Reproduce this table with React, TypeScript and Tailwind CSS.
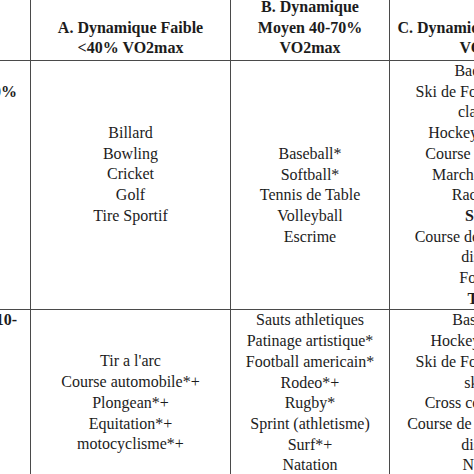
import React from "react";

function Head({ lines }: { lines: string[] }) {
  return (
    <div className="h-[60px] bg-white flex flex-col justify-end items-center pb-[1px] font-bold text-center">
      {lines.map((l, i) => (
        <div key={i} className="whitespace-nowrap">
          {l}
        </div>
      ))}
    </div>
  );
}

type Item = { t: string; b?: boolean };

function Cell({ items, pad }: { items: Item[]; pad: string }) {
  return (
    <div className={`bg-white flex flex-col items-center text-center ${pad}`}>
      {items.map((it, i) => (
        <div key={i} className={`whitespace-nowrap ${it.b ? "font-bold" : ""}`}>
          {it.t}
        </div>
      ))}
    </div>
  );
}

const t = (s: string): Item => ({ t: s });

export default function App() {
  return (
    <div className="w-[474px] h-[474px] overflow-hidden bg-white font-['Liberation_Serif',serif] text-[16px] leading-[20.7px] text-[#1c1c1c]">
      <div className="grid w-max grid-cols-[30px_199px_158px_200px] gap-px bg-[#4a4a4a]">
        {/* header row */}
        <div className="h-[60px] bg-white" />
        <Head lines={["A. Dynamique Faible", "<40% VO2max"]} />
        <Head lines={["B. Dynamique", "Moyen 40-70%", "VO2max"]} />
        <Head lines={["C. Dynamique Eleve >70%", "VO2max"]} />

        {/* row I */}
        <div className="bg-white overflow-hidden flex flex-col items-end pr-[13px] font-bold">
          <div className="h-[20.7px]" />
          <div className="whitespace-nowrap">I. Statique Faible &lt;10%</div>
        </div>
        <Cell
          pad="pt-[62px]"
          items={[t("Billard"), t("Bowling"), t("Cricket"), t("Golf"), t("Tire Sportif")]}
        />
        <Cell
          pad="pt-[83px]"
          items={[t("Baseball*"), t("Softball*"), t("Tennis de Table"), t("Volleyball"), t("Escrime")]}
        />
        <Cell
          pad="pt-0"
          items={[
            t("Badminton"),
            t("Ski de Fond (technique"),
            t("classique)"),
            t("Hockey sur gazon*"),
            t("Course d'orientation"),
            t("Marche athletique"),
            t("Racquetball"),
            { t: "Squash", b: true },
            t("Course de fond (longue"),
            t("distance)"),
            t("Football*"),
            { t: "Tennis", b: true },
          ]}
        />

        {/* row II */}
        <div className="bg-white overflow-hidden flex flex-col items-end pr-[13px] font-bold">
          <div className="whitespace-nowrap">II. Statique Moyen 10-</div>
        </div>
        <Cell
          pad="pt-[41px]"
          items={[
            t("Tir a l'arc"),
            t("Course automobile*+"),
            t("Plongean*+"),
            t("Equitation*+"),
            t("motocyclisme*+"),
          ]}
        />
        <Cell
          pad="pt-0"
          items={[
            t("Sauts athletiques"),
            t("Patinage artistique*"),
            t("Football americain*"),
            t("Rodeo*+"),
            t("Rugby*"),
            t("Sprint (athletisme)"),
            t("Surf*+"),
            t("Natation"),
          ]}
        />
        <Cell
          pad="pt-0"
          items={[
            t("Basketball*"),
            t("Hockey sur glace*"),
            t("Ski de Fond (technique"),
            t("skating)"),
            t("Cross country (ski)*"),
            t("Course de fond (moyenne"),
            t("distance)"),
            t("Natation"),
            t("Handball"),
          ]}
        />
      </div>
    </div>
  );
}
